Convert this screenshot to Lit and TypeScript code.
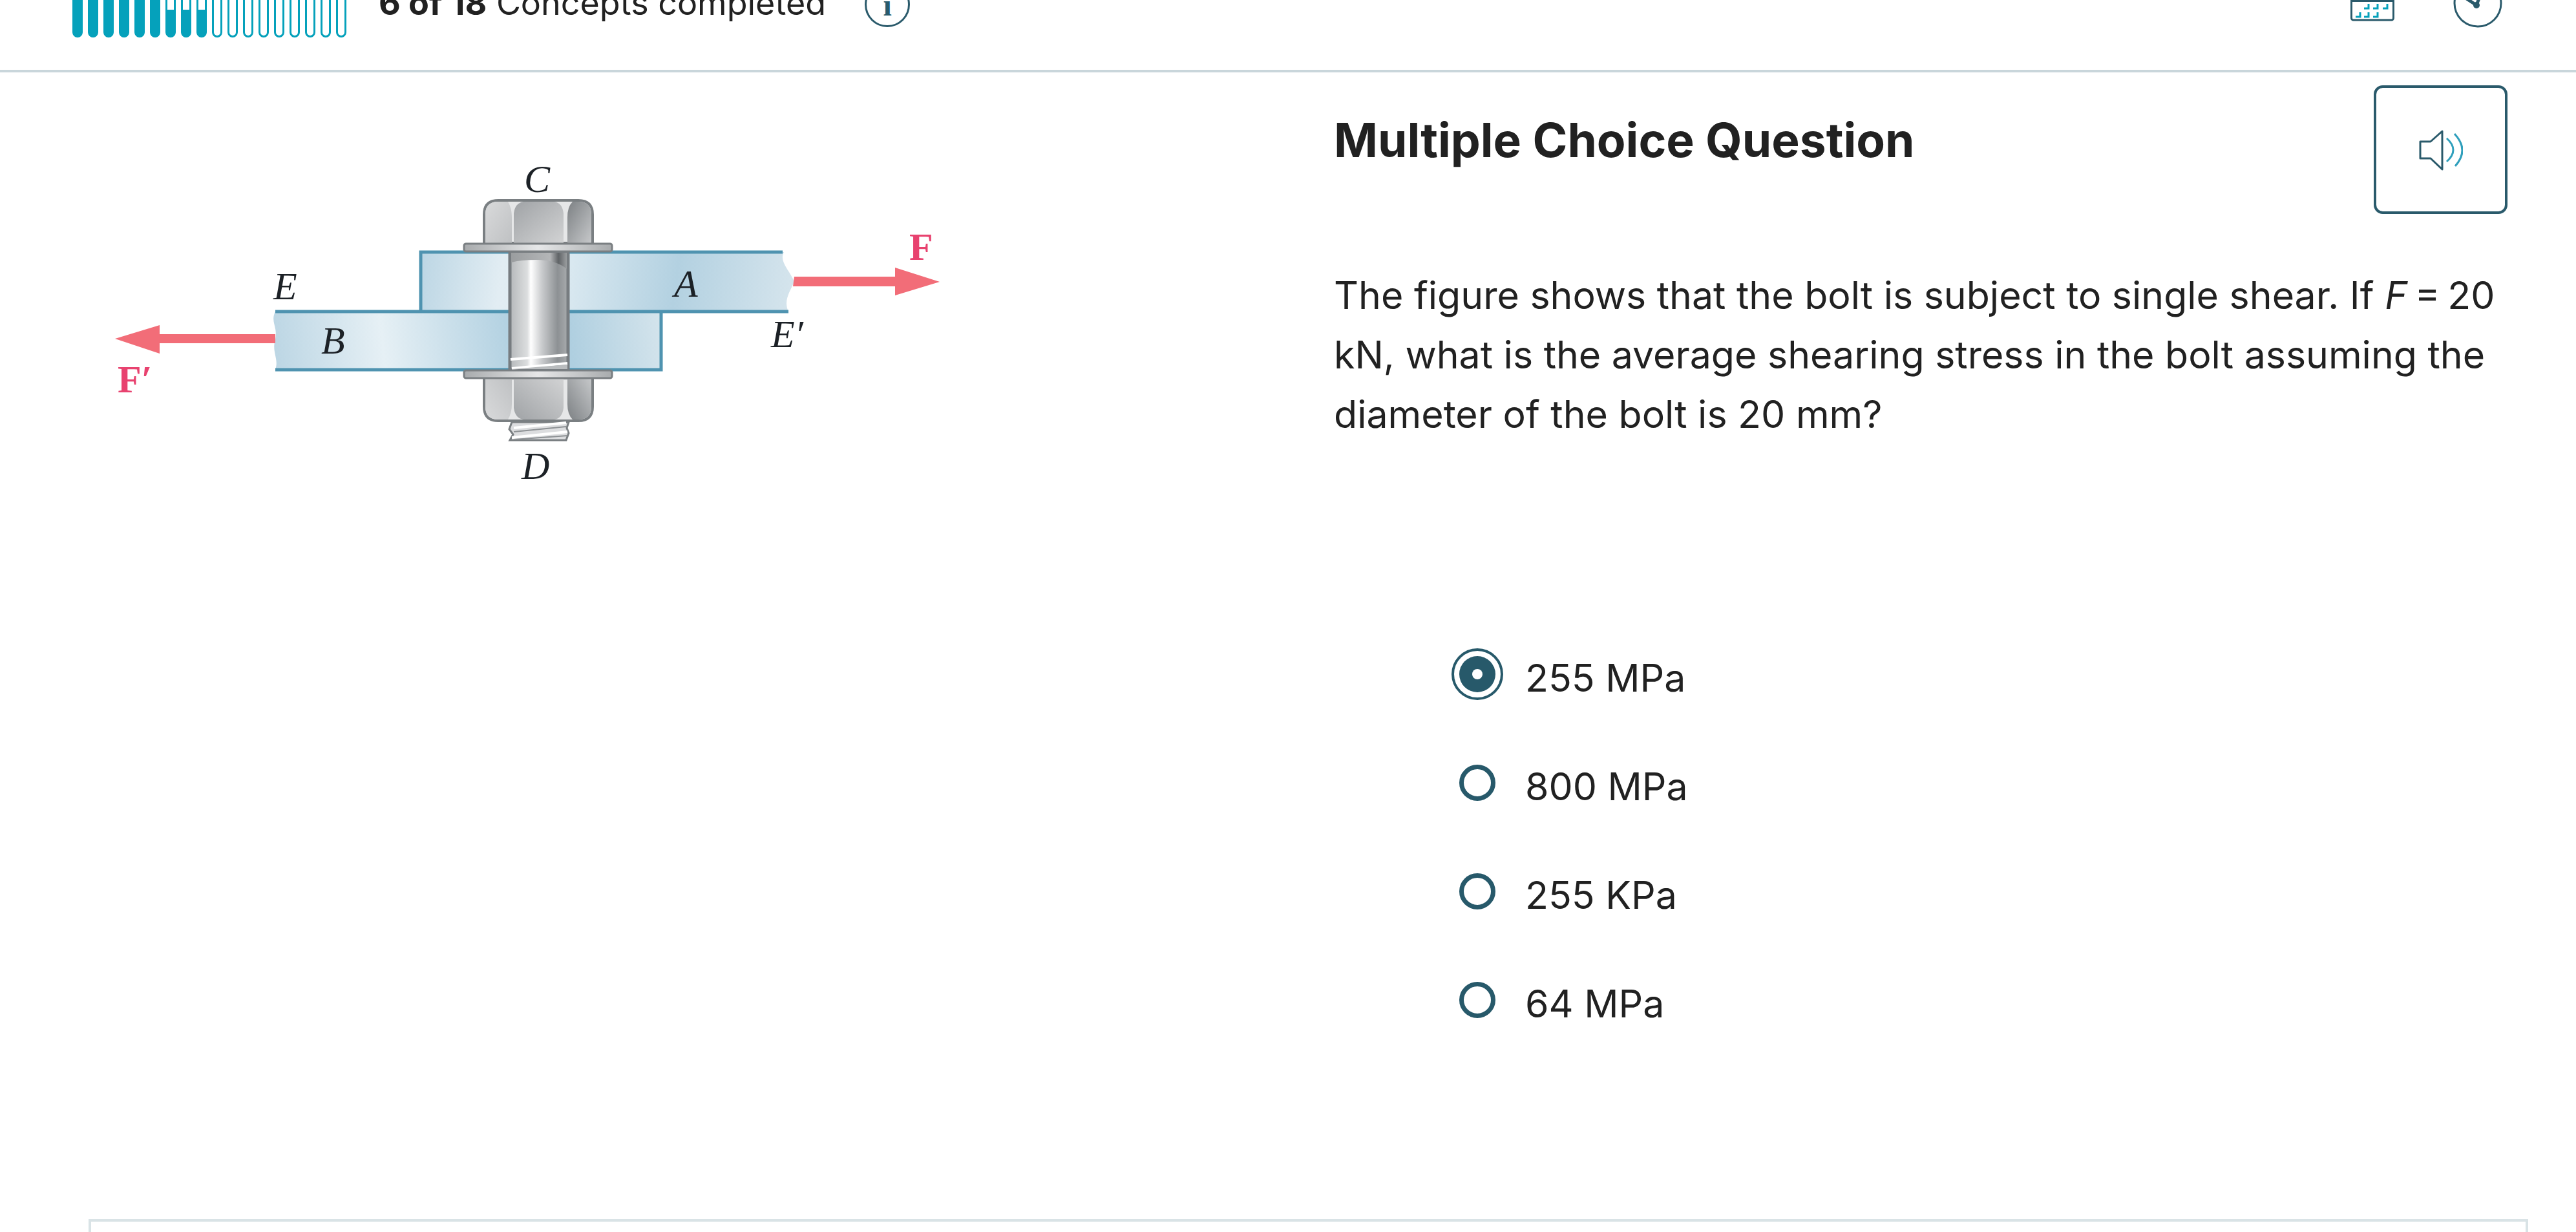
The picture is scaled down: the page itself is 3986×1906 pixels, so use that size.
import { LitElement, html, svg, css } from "lit";
import { customElement } from "lit/decorators.js";

const BARS = Array.from({ length: 18 }, (_, i) => (i < 6 ? "bar fill" : i < 9 ? "bar part" : "bar"));
const OPTIONS = ["255 MPa", "800 MPa", "255 KPa", "64 MPa"];

@customElement("app-root")
export class AppRoot extends LitElement {
  static styles = css`
    :host { display: flex; flex-direction: column; width: 3986px; height: 1906px; overflow: hidden; background: #fff; font-family: "Inter", "Liberation Sans", sans-serif; color: #212121; }
    .top { flex: none; display: flex; align-items: flex-end; height: 108px; border-bottom: 4px solid #c9d6db; box-sizing: content-box; }
    .bars { display: flex; gap: 8px; margin: 0 0 50px 112px; }
    .bar { width: 16px; height: 78px; box-sizing: border-box; border: 3px solid #05a1bb; border-radius: 0 0 8px 8px; background: #fff; }
    .fill { background: #05a1bb; }
    .part { background: linear-gradient(#fff 32px, #05a1bb 32px); }
    .progress { margin: 0 0 75px 50px; font-size: 52px; line-height: 56px; white-space: nowrap; }
    .progress b { font-weight: 700; }
    .info { margin: 0 0 66px 60px; width: 70px; height: 70px; flex: none; box-sizing: border-box; border: 3px solid #2a5a6b; border-radius: 50%; display: flex; align-items: center; justify-content: center; color: #2a5a6b; font: 700 48px "Liberation Serif", serif; }
    .keys { margin: 0 0 75px auto; display: block; flex: none; }
    .clock { margin: 0 114px 65px 91px; display: block; flex: none; }
    .main { flex: 1; display: flex; min-height: 0; }
    .figure { flex: none; width: 2064px; }
    .figure svg { display: block; margin: 128px 0 0 170px; }
    .lab { font: italic 60px "Liberation Serif", serif; fill: #1c2126; }
    .force { font: 700 60px "Liberation Serif", serif; fill: #e8426f; }
    .q { flex: none; width: 1816px; }
    .head { display: flex; justify-content: space-between; align-items: flex-start; padding-top: 20px; }
    h1 { margin: 40px 0 0; font-size: 73px; line-height: 90px; font-weight: 700; color: #212121; }
    .audio { width: 207px; height: 199px; box-sizing: border-box; border: 4px solid #2a5a6b; border-radius: 14px; display: flex; align-items: center; justify-content: center; background: #fff; padding: 0; }
    .body { margin: 80px 0 0; width: 1816px; font-size: 59px; line-height: 92px; }
    .eq { word-spacing: -5px; }
    .opts { list-style: none; margin: 277px 0 0 182px; padding: 0; display: flex; flex-direction: column; }
    .opt { display: flex; align-items: center; height: 168px; font-size: 59px; }
    .dot { width: 80px; display: flex; justify-content: center; margin: 0 34px 10px 0; }
    .dot svg { display: block; }
    .answer { flex: none; height: 20px; margin: 0 74px 0 137px; border: 4px solid #d9e3e6; border-bottom: 0; box-sizing: border-box; }
  `;

  private plates() {
    return svg`
      <path d="M651 390H1213C1205 405 1222 418 1229 436C1222 452 1212 465 1220 482H651Z" fill="url(#pa)"></path>
      <path d="M426 482H1023V572H426C432 555 420 545 426 525C430 505 418 498 426 482Z" fill="url(#pb)"></path>
      <path d="M651 482V390H1211M426 482H1220M426 572H1023V482" fill="none" stroke="#4f93b0" stroke-width="5"></path>
    `;
  }

  private nut(lower: boolean) {
    const t = lower ? "translate(0 961) scale(1 -1)" : "translate(0 0)";
    return svg`
      <g transform=${t}>
        <path d="M749 376V332Q749 310 771 310H895Q917 310 917 332V376Z" fill="#e6e7e8" stroke="#7a7f82" stroke-width="4"></path>
        <path d="M751 376V332Q751 312 771 312H786Q792 322 792 336V376Z" fill="url(#n1)"></path>
        <path d="M795 376V330Q797 314 810 312H858Q870 314 872 330V376Z" fill="url(#n2)"></path>
        <path d="M878 376V336Q878 320 886 312H895Q915 312 915 332V376Z" fill="url(#n3)"></path>
      </g>
    `;
  }

  private figure() {
    return html`
      <svg width="1300" height="520" viewBox="170 240 1300 520" role="img" aria-label="Bolt in single shear">
        <defs>
          <linearGradient id="pa" gradientUnits="userSpaceOnUse" x1="651" y1="390" x2="1230" y2="470">
            <stop offset="0" stop-color="#bcd6e4"></stop><stop offset=".22" stop-color="#e2edf3"></stop>
            <stop offset=".4" stop-color="#d9e8f0"></stop><stop offset=".68" stop-color="#b3d1e1"></stop>
            <stop offset="1" stop-color="#d6e5ed"></stop>
          </linearGradient>
          <linearGradient id="pb" gradientUnits="userSpaceOnUse" x1="426" y1="560" x2="1023" y2="490">
            <stop offset="0" stop-color="#bcd6e4"></stop><stop offset=".28" stop-color="#e6f0f5"></stop>
            <stop offset=".6" stop-color="#b4d2e2"></stop><stop offset=".76" stop-color="#afcfe0"></stop>
            <stop offset="1" stop-color="#d4e4ec"></stop>
          </linearGradient>
          <linearGradient id="bolt">
            <stop offset="0" stop-color="#b5b8ba"></stop><stop offset=".3" stop-color="#dcdedf"></stop>
            <stop offset=".36" stop-color="#fff"></stop><stop offset=".55" stop-color="#c9cbcd"></stop>
            <stop offset=".82" stop-color="#8d9194"></stop><stop offset="1" stop-color="#a9acae"></stop>
          </linearGradient>
          <linearGradient id="shade">
            <stop offset="0" stop-color="#9a9d9f"></stop><stop offset=".7" stop-color="#b4b6b8"></stop>
            <stop offset=".85" stop-color="#5f6366"></stop><stop offset="1" stop-color="#9a9d9f"></stop>
          </linearGradient>
          <linearGradient id="wash">
            <stop offset="0" stop-color="#a8abad"></stop><stop offset=".5" stop-color="#e6e7e8"></stop>
            <stop offset="1" stop-color="#a8abad"></stop>
          </linearGradient>
          <linearGradient id="n1" x1="0" y1="0" x2="1" y2="1">
            <stop offset="0" stop-color="#d9dadb"></stop><stop offset="1" stop-color="#bfc1c3"></stop>
          </linearGradient>
          <linearGradient id="n2" x1="0" y1="0" x2="1" y2="1">
            <stop offset="0" stop-color="#a0a3a6"></stop><stop offset="1" stop-color="#d2d3d4"></stop>
          </linearGradient>
          <linearGradient id="n3" x1="0" y1="0" x2="1" y2="1">
            <stop offset="0" stop-color="#7d8184"></stop><stop offset="1" stop-color="#c6c8ca"></stop>
          </linearGradient>
        </defs>

        ${this.plates()}

        <rect x="789" y="389" width="90" height="184" fill="url(#bolt)" stroke="#777c80" stroke-width="5"></rect>
        <path d="M791 391H877V416Q860 402 830 402Q805 402 791 406Z" fill="url(#shade)"></path>
        <path d="M790 556L878 549M792 570L878 562" fill="none" stroke="#fff" stroke-width="4"></path>
        <path d="M792 571L878 564V571Z" fill="#b9bcbe"></path>

        ${this.nut(false)} ${this.nut(true)}

        <rect x="718" y="377" width="229" height="12" rx="3" fill="url(#wash)" stroke="#7a7f82" stroke-width="3"></rect>
        <rect x="718" y="573" width="229" height="12" rx="3" fill="url(#wash)" stroke="#7a7f82" stroke-width="3"></rect>

        <path d="M792 653L880 653L877 662L880 670L876 681H789L794 672L788 664Z" fill="#dcdddf" stroke="#7a7f82" stroke-width="3"></path>
        <path d="M795 662L876 654M792 677L878 668" fill="none" stroke="#fff" stroke-width="4"></path>
        <path d="M795 668L876 660M795 680L878 674" fill="none" stroke="#8d9194" stroke-width="2"></path>

        <path d="M426 517H247V503L178 524L247 547V531H426Z" fill="#f26d78"></path>
        <path d="M1229 428H1385V414L1454 436L1385 457V443H1227Z" fill="#f26d78"></path>

        <text class="lab" x="811" y="297">C</text>
        <text class="lab" x="423" y="463">E</text>
        <text class="lab" x="497" y="547">B</text>
        <text class="lab" x="1043" y="459">A</text>
        <text class="lab" x="1193" y="537">E′</text>
        <text class="lab" x="807" y="741">D</text>
        <text class="force" x="1407" y="402">F</text>
        <text class="force" x="182" y="607">F′</text>
      </svg>
    `;
  }

  render() {
    return html`
      <header class="top">
        <div class="bars">${BARS.map((c) => html`<div class=${c}></div>`)}</div>
        <div class="progress"><b>6 of 18</b> Concepts completed</div>
        <div class="info">i</div>
        <svg class="keys" width="68" height="70" viewBox="0 0 68 70" fill="none">
          <rect x="1.5" y="-20" width="65" height="88" rx="3" stroke="#2a5a6b" stroke-width="3"></rect>
          <path d="M1 38.5H67" stroke="#2a5a6b" stroke-width="3"></path>
          <path d="M21 50H28V43M35 50H42V43M50 50H57V43M8 63H15V56M21 63H28V56M35 63H42V56" stroke="#05a1bb" stroke-width="3"></path>
        </svg>
        <svg class="clock" width="76" height="76" viewBox="0 0 76 76" fill="none">
          <circle cx="38" cy="38" r="36" stroke="#2a5a6b" stroke-width="3"></circle>
          <path d="M10 24L36 41L44 20" stroke="#2a5a6b" stroke-width="5"></path>
          <circle cx="36" cy="41" r="5" fill="#2a5a6b"></circle>
        </svg>
      </header>
      <main class="main">
        <section class="figure">${this.figure()}</section>
        <section class="q">
          <div class="head">
            <h1>Multiple Choice Question</h1>
            <button class="audio" aria-label="Read aloud">
              <svg width="68" height="64" viewBox="0 0 68 64" fill="none">
                <path d="M2 19H18L36 3V62L18 45H2Z" stroke="#2a5a6b" stroke-width="3" stroke-linejoin="round"></path>
                <path d="M43 14Q63 32 43 50M55 7Q78.5 32 56 57" stroke="#2f9fbc" stroke-width="3"></path>
              </svg>
            </button>
          </div>
          <p class="body">The figure shows that the bolt is subject to single shear. If <span class="eq"><i>F</i> = 20</span> kN, what is the average shearing stress in the bolt assuming the diameter of the bolt is 20 mm?</p>
          <ul class="opts">
            ${OPTIONS.map((o, i) => html`
              <li class="opt">
                <span class="dot">
                  ${i === 0
                    ? html`<svg width="80" height="80" viewBox="0 0 80 80">
                        <circle cx="40" cy="40" r="38" fill="none" stroke="#27596a" stroke-width="4"></circle>
                        <circle cx="40" cy="40" r="28" fill="#27596a"></circle>
                        <circle cx="40" cy="40" r="8" fill="#fff"></circle>
                      </svg>`
                    : html`<svg width="56" height="56" viewBox="0 0 56 56">
                        <circle cx="28" cy="28" r="24.5" fill="none" stroke="#27596a" stroke-width="7"></circle>
                      </svg>`}
                </span>
                <span>${o}</span>
              </li>
            `)}
          </ul>
        </section>
      </main>
      <div class="answer"></div>
    `;
  }
}
